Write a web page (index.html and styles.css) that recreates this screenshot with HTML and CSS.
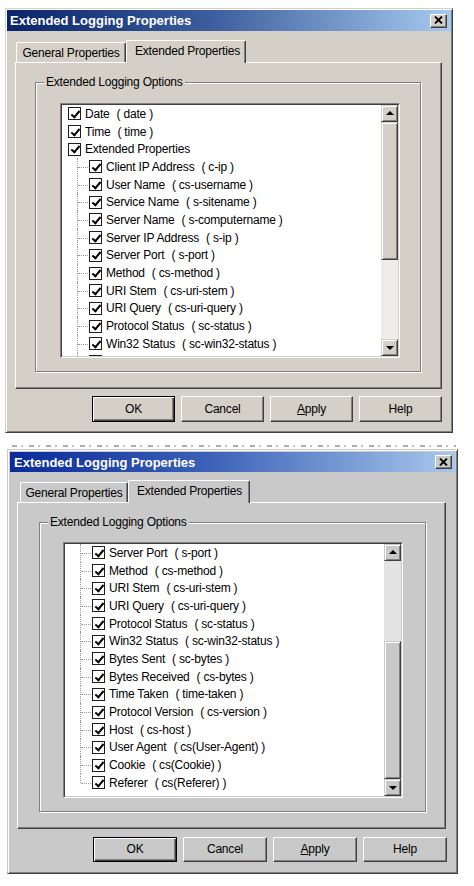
FILE: index.html
```html
<!DOCTYPE html>
<html>
<head>
<meta charset="utf-8">
<link rel="stylesheet" href="styles.css">
</head>
<body>
<div class="dialog d1">
  <div class="titlebar">
    <span class="title">Extended Logging Properties</span>
    <span class="close"><svg width="9" height="8" viewBox="0 0 9 8"><path d="M1 0.5 L8 7.5 M8 0.5 L1 7.5" stroke="#000" stroke-width="1.8"/></svg></span>
  </div>
  <div class="tabs">
    <div class="tab">General Properties</div>
    <div class="tab active">Extended Properties</div>
  </div>
  <div class="panel">
    <div class="group">
      <span class="legend">Extended Logging Options</span>
      <div class="listbox">
        <div class="items">
          <div class="row"><span class="cb"></span><span class="lbl">Date</span><span class="fld">( date )</span></div>
          <div class="row"><span class="cb"></span><span class="lbl">Time</span><span class="fld">( time )</span></div>
          <div class="row"><span class="cb"></span><span class="lbl">Extended Properties</span></div>
          <div class="row child"><span class="cb"></span><span class="lbl">Client IP Address</span><span class="fld">( c-ip )</span></div>
          <div class="row child"><span class="cb"></span><span class="lbl">User Name</span><span class="fld">( cs-username )</span></div>
          <div class="row child"><span class="cb"></span><span class="lbl">Service Name</span><span class="fld">( s-sitename )</span></div>
          <div class="row child"><span class="cb"></span><span class="lbl">Server Name</span><span class="fld">( s-computername )</span></div>
          <div class="row child"><span class="cb"></span><span class="lbl">Server IP Address</span><span class="fld">( s-ip )</span></div>
          <div class="row child"><span class="cb"></span><span class="lbl">Server Port</span><span class="fld">( s-port )</span></div>
          <div class="row child"><span class="cb"></span><span class="lbl">Method</span><span class="fld">( cs-method )</span></div>
          <div class="row child"><span class="cb"></span><span class="lbl">URI Stem</span><span class="fld">( cs-uri-stem )</span></div>
          <div class="row child"><span class="cb"></span><span class="lbl">URI Query</span><span class="fld">( cs-uri-query )</span></div>
          <div class="row child"><span class="cb"></span><span class="lbl">Protocol Status</span><span class="fld">( sc-status )</span></div>
          <div class="row child"><span class="cb"></span><span class="lbl">Win32 Status</span><span class="fld">( sc-win32-status )</span></div>
          <div class="row child"><span class="cb"></span><span class="lbl">Bytes Sent</span><span class="fld">( sc-bytes )</span></div>
        </div>
        <div class="sb">
          <div class="arrow up"></div>
          <div class="thumb"></div>
          <div class="track"></div>
          <div class="arrow down"></div>
        </div>
      </div>
    </div>
  </div>
  <div class="buttons">
    <div class="btn default">OK</div>
    <div class="btn">Cancel</div>
    <div class="btn"><u>A</u>pply</div>
    <div class="btn">Help</div>
  </div>
</div>

<div class="scrap"></div>

<div class="dialog d2">
  <div class="titlebar">
    <span class="title">Extended Logging Properties</span>
    <span class="close"><svg width="9" height="8" viewBox="0 0 9 8"><path d="M1 0.5 L8 7.5 M8 0.5 L1 7.5" stroke="#000" stroke-width="1.8"/></svg></span>
  </div>
  <div class="tabs">
    <div class="tab">General Properties</div>
    <div class="tab active">Extended Properties</div>
  </div>
  <div class="panel">
    <div class="group">
      <span class="legend">Extended Logging Options</span>
      <div class="listbox">
        <div class="items">
          <div class="row child"><span class="cb"></span><span class="lbl">Server Port</span><span class="fld">( s-port )</span></div>
          <div class="row child"><span class="cb"></span><span class="lbl">Method</span><span class="fld">( cs-method )</span></div>
          <div class="row child"><span class="cb"></span><span class="lbl">URI Stem</span><span class="fld">( cs-uri-stem )</span></div>
          <div class="row child"><span class="cb"></span><span class="lbl">URI Query</span><span class="fld">( cs-uri-query )</span></div>
          <div class="row child"><span class="cb"></span><span class="lbl">Protocol Status</span><span class="fld">( sc-status )</span></div>
          <div class="row child"><span class="cb"></span><span class="lbl">Win32 Status</span><span class="fld">( sc-win32-status )</span></div>
          <div class="row child"><span class="cb"></span><span class="lbl">Bytes Sent</span><span class="fld">( sc-bytes )</span></div>
          <div class="row child"><span class="cb"></span><span class="lbl">Bytes Received</span><span class="fld">( cs-bytes )</span></div>
          <div class="row child"><span class="cb"></span><span class="lbl">Time Taken</span><span class="fld">( time-taken )</span></div>
          <div class="row child"><span class="cb"></span><span class="lbl">Protocol Version</span><span class="fld">( cs-version )</span></div>
          <div class="row child"><span class="cb"></span><span class="lbl">Host</span><span class="fld">( cs-host )</span></div>
          <div class="row child"><span class="cb"></span><span class="lbl">User Agent</span><span class="fld">( cs(User-Agent) )</span></div>
          <div class="row child"><span class="cb"></span><span class="lbl">Cookie</span><span class="fld">( cs(Cookie) )</span></div>
          <div class="row child last"><span class="cb"></span><span class="lbl">Referer</span><span class="fld">( cs(Referer) )</span></div>
        </div>
        <div class="sb">
          <div class="arrow up"></div>
          <div class="track"></div>
          <div class="thumb"></div>
          <div class="arrow down"></div>
        </div>
      </div>
    </div>
  </div>
  <div class="buttons">
    <div class="btn default">OK</div>
    <div class="btn">Cancel</div>
    <div class="btn"><u>A</u>pply</div>
    <div class="btn">Help</div>
  </div>
</div>
</body>
</html>
```

FILE: styles.css
```css
* { box-sizing: border-box; }

html, body {
  margin: 0;
  padding: 0;
  background: #ffffff;
}

body {
  font-family: "Liberation Sans", Arial, sans-serif;
  font-size: 12px;
  letter-spacing: -0.2px;
  color: #000;
}

.dialog {
  --bg: #d4d0c8;
  background: var(--bg);
  border: 1px solid;
  border-color: #d4d0c8 #404040 #404040 #d4d0c8;
  box-shadow: inset 1px 1px 0 #ffffff, inset -1px -1px 0 #808080;
  display: flex;
  flex-direction: column;
}

.d1 {
  width: 448px;
  height: 425px;
  margin: 8px 0 0 5px;
  padding: 1px;
}

.d2 {
  --bg: #c9c9c9;
  width: 451px;
  height: 425px;
  margin: 2px 0 0 7px;
  padding: 2px;
  border-color: #c9c9c9 #404040 #404040 #c9c9c9;
}

.scrap {
  margin: 12px 0 0 12px;
  width: 444px;
  height: 2px;
  background: repeating-linear-gradient(90deg, #8a8a8a 0 5px, transparent 5px 9px, #aaa 9px 11px, transparent 11px 17px);
  opacity: 0.7;
}

/* title bar */
.titlebar {
  display: flex;
  align-items: center;
  justify-content: space-between;
  height: 21px;
  padding: 0 4px 0 3px;
  background: linear-gradient(90deg, #0a246a 0%, #3a5c9c 45%, #a6caf0 100%);
}

.d2 .titlebar {
  height: 20px;
  padding: 0 3px 0 4px;
  background: linear-gradient(90deg, #0b2a9c 0%, #3c62b8 45%, #a8c8ec 100%);
}

.title {
  color: #ffffff;
  font-weight: bold;
  font-size: 13px;
  letter-spacing: 0;
}

.close {
  width: 17px;
  height: 14px;
  background: var(--bg);
  border: 1px solid;
  border-color: #ffffff #404040 #404040 #ffffff;
  box-shadow: inset -1px -1px 0 #808080;
  display: flex;
  align-items: center;
  justify-content: center;
  padding-bottom: 1px;
}

/* tabs */
.tabs {
  display: flex;
  align-items: flex-end;
  height: 22px;
  margin: 9px 0 0 9px;
  position: relative;
  z-index: 1;
}

.d2 .tabs {
  margin: 8px 0 0 10px;
}

.tab {
  height: 20px;
  width: 110px;
  border: 1px solid;
  border-bottom: none;
  border-color: #ffffff #404040 #404040 #ffffff;
  border-radius: 2px 2px 0 0;
  box-shadow: inset -1px 0 0 #808080;
  display: flex;
  align-items: center;
  justify-content: center;
  padding-top: 1px;
  background: var(--bg);
}

.d2 .tab {
  width: 108px;
}

.tab.active {
  height: 23px;
  width: 120px;
  margin-bottom: -1px;
  justify-content: flex-start;
  padding: 0 0 2px 8px;
}

.d2 .tab.active {
  width: 122px;
}

/* panel */
.panel {
  margin-left: 8px;
  width: 427px;
  height: 327px;
  border: 1px solid;
  border-color: #ffffff #404040 #404040 #ffffff;
  box-shadow: inset -1px -1px 0 #808080;
}

.d2 .panel {
  margin-left: 7px;
  width: 429px;
}

/* group box */
.group {
  position: relative;
  margin: 19px 0 0 19px;
  width: 386px;
  height: 290px;
  border: 1px solid #808080;
  box-shadow: inset 1px 1px 0 #ffffff, 1px 1px 0 #ffffff;
}

.d2 .group {
  margin: 19px 0 0 21px;
  width: 387px;
}

.legend {
  position: absolute;
  left: 8px;
  top: -8px;
  padding: 0 2px;
  line-height: 14px;
  background: var(--bg);
}

/* listbox */
.listbox {
  display: flex;
  margin: 20px 0 0 24px;
  width: 340px;
  height: 255px;
  background: #ffffff;
  border: 1px solid;
  border-color: #808080 #ffffff #ffffff #808080;
  box-shadow: inset 1px 1px 0 #404040, inset -1px -1px 0 var(--bg);
  padding: 1px;
}

.d2 .listbox {
  margin: 19px 0 0 23px;
  height: 256px;
}

.items {
  flex: 1;
  overflow: hidden;
}

.row {
  position: relative;
  height: 17.7px;
  display: flex;
  align-items: center;
  padding-left: 6px;
  white-space: nowrap;
}

.row.child {
  padding-left: 27px;
}

.row.child::before {
  content: "";
  position: absolute;
  left: 15px;
  top: 0;
  bottom: 0;
  border-left: 1px dotted #9a9a9a;
}

.row.child.last::before {
  bottom: 50%;
}

.row.child::after {
  content: "";
  position: absolute;
  left: 16px;
  top: 50%;
  width: 10px;
  border-top: 1px dotted #9a9a9a;
}

.cb {
  position: relative;
  flex: none;
  width: 13px;
  height: 13px;
  border: 1px solid #1e1e1e;
  background: #ffffff;
  margin-right: 4px;
}

.cb::after {
  content: "";
  position: absolute;
  left: 3.5px;
  top: 0.5px;
  width: 3px;
  height: 7px;
  border: solid #000000;
  border-width: 0 2px 2px 0;
  transform: rotate(40deg);
}

.fld {
  margin-left: 7px;
}

/* scrollbar */
.sb {
  flex: none;
  width: 17px;
  display: flex;
  flex-direction: column;
}

.arrow {
  height: 17px;
  flex: none;
  background: var(--bg);
  border: 1px solid;
  border-color: #d4d0c8 #404040 #404040 #d4d0c8;
  box-shadow: inset 1px 1px 0 #ffffff, inset -1px -1px 0 #808080;
  display: flex;
  align-items: center;
  justify-content: center;
}

.d2 .arrow {
  border-color: #c9c9c9 #404040 #404040 #c9c9c9;
}

.arrow::after {
  content: "";
  width: 0;
  height: 0;
  border-left: 4px solid transparent;
  border-right: 4px solid transparent;
}

.arrow.up::after {
  border-bottom: 4px solid #000;
  margin-bottom: 1px;
}

.arrow.down::after {
  border-top: 4px solid #000;
  margin-top: 1px;
}

.thumb {
  height: 138px;
  flex: none;
  background: var(--bg);
  border: 1px solid;
  border-color: #d4d0c8 #404040 #404040 #d4d0c8;
  box-shadow: inset 1px 1px 0 #ffffff, inset -1px -1px 0 #808080;
}

.d2 .thumb {
  border-color: #c9c9c9 #404040 #404040 #c9c9c9;
}

.track {
  flex: 1;
  background: #eeede9;
}

.d2 .track {
  background: #e3e3e3;
}

/* buttons */
.buttons {
  display: flex;
  justify-content: flex-end;
  gap: 6px;
  margin-top: 7px;
  padding-right: 9px;
}

.d2 .buttons {
  margin-top: 8px;
  padding-right: 8px;
}

.btn {
  width: 83px;
  height: 26px;
  display: flex;
  align-items: center;
  justify-content: center;
  background: var(--bg);
  border: 1px solid;
  border-color: #ffffff #404040 #404040 #ffffff;
  box-shadow: inset -1px -1px 0 #808080;
  padding-bottom: 1px;
}

.d2 .btn {
  width: 84px;
  height: 25px;
}

.btn.default {
  border: 1px solid #000000;
  box-shadow: inset 1px 1px 0 #ffffff, inset -1px -1px 0 #404040, inset -2px -2px 0 #808080;
}

.btn u {
  text-decoration: underline;
}
```
